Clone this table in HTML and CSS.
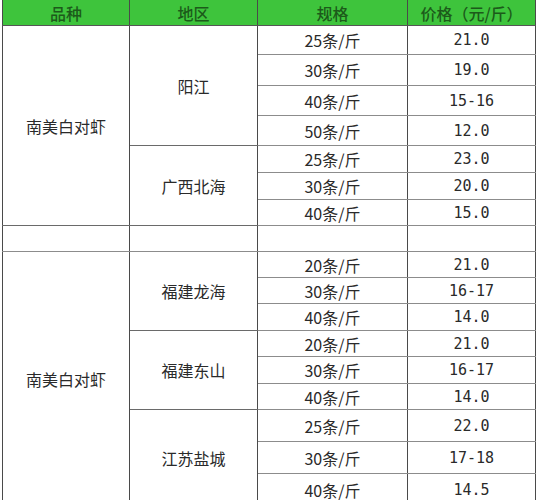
FILE: index.html
```html
<!DOCTYPE html>
<html lang="zh">
<head>
<meta charset="utf-8">
<link rel="stylesheet" href="styles.css">
</head>
<body>
<div class="wrap">
<table class="price">
  <colgroup>
    <col class="c1"><col class="c2"><col class="c3"><col class="c4">
  </colgroup>
  <thead>
    <tr class="hd"><th>品种</th><th>地区</th><th>规格</th><th>价格（元/斤）</th></tr>
  </thead>
  <tbody>
    <tr class="h29"><td rowspan="7" class="name">南美白对虾</td><td rowspan="4" class="area">阳江</td><td>25条/斤</td><td class="num">21.0</td></tr>
    <tr class="h31"><td>30条/斤</td><td class="num">19.0</td></tr>
    <tr class="h30"><td>40条/斤</td><td class="num">15-16</td></tr>
    <tr class="h30"><td>50条/斤</td><td class="num">12.0</td></tr>
    <tr class="h27"><td rowspan="3" class="area">广西北海</td><td>25条/斤</td><td class="num">23.0</td></tr>
    <tr class="h27"><td>30条/斤</td><td class="num">20.0</td></tr>
    <tr class="h26"><td>40条/斤</td><td class="num">15.0</td></tr>
    <tr class="h26"><td></td><td></td><td></td><td></td></tr>
    <tr class="h26"><td rowspan="9" class="name">南美白对虾</td><td rowspan="3" class="area">福建龙海</td><td>20条/斤</td><td class="num">21.0</td></tr>
    <tr class="h26"><td>30条/斤</td><td class="num">16-17</td></tr>
    <tr class="h27"><td>40条/斤</td><td class="num">14.0</td></tr>
    <tr class="h26"><td rowspan="3" class="area">福建东山</td><td>20条/斤</td><td class="num">21.0</td></tr>
    <tr class="h27"><td>30条/斤</td><td class="num">16-17</td></tr>
    <tr class="h26"><td>40条/斤</td><td class="num">14.0</td></tr>
    <tr class="h32"><td rowspan="3" class="area">江苏盐城</td><td>25条/斤</td><td class="num">22.0</td></tr>
    <tr class="h32"><td>30条/斤</td><td class="num">17-18</td></tr>
    <tr class="h32"><td>40条/斤</td><td class="num">14.5</td></tr>
  </tbody>
</table>
</div>
</body>
</html>
```
FILE: styles.css
```css
html, body {
  margin: 0;
  padding: 0;
  background: #ffffff;
  overflow: hidden;
}
.wrap {
  padding-left: 2px;
  width: 533px;
}
.price {
  width: 533px;
  border-collapse: collapse;
  table-layout: fixed;
  font-family: "Noto Sans CJK SC", "Noto Sans", sans-serif;
  font-size: 16px;
  color: #2a2a2a;
}
.c1 { width: 127px; }
.c2 { width: 128px; }
.c3 { width: 150px; }
.c4 { width: 128px; }
.price th {
  background: #3ec43c;
  color: #1c5a1a;
  font-weight: 500;
  height: 25px;
  padding: 0;
  line-height: 20px;
  border-left: 1px solid #4a4a4a;
  border-right: 1px solid #4a4a4a;
  border-bottom: 1px solid #555;
}
.price td {
  padding: 0;
  text-align: center;
  line-height: 20px;
  border-top: 1px solid #8c8c8c;
  border-bottom: 1px solid #8c8c8c;
  border-left: 1px solid #4a4a4a;
  border-right: 1px solid #4a4a4a;
}
.price td.name, .price td.area {
  border-top: 1px solid #6a6a6a;
  border-bottom: 1px solid #6a6a6a;
}
.price td.num {
  font-family: "DejaVu Sans Mono", "Liberation Mono", monospace;
  font-size: 15px;
}
.h26 { height: 26px; }
.h27 { height: 27px; }
.h29 { height: 29px; }
.h30 { height: 30px; }
.h31 { height: 31px; }
.h32 { height: 32px; }
```
